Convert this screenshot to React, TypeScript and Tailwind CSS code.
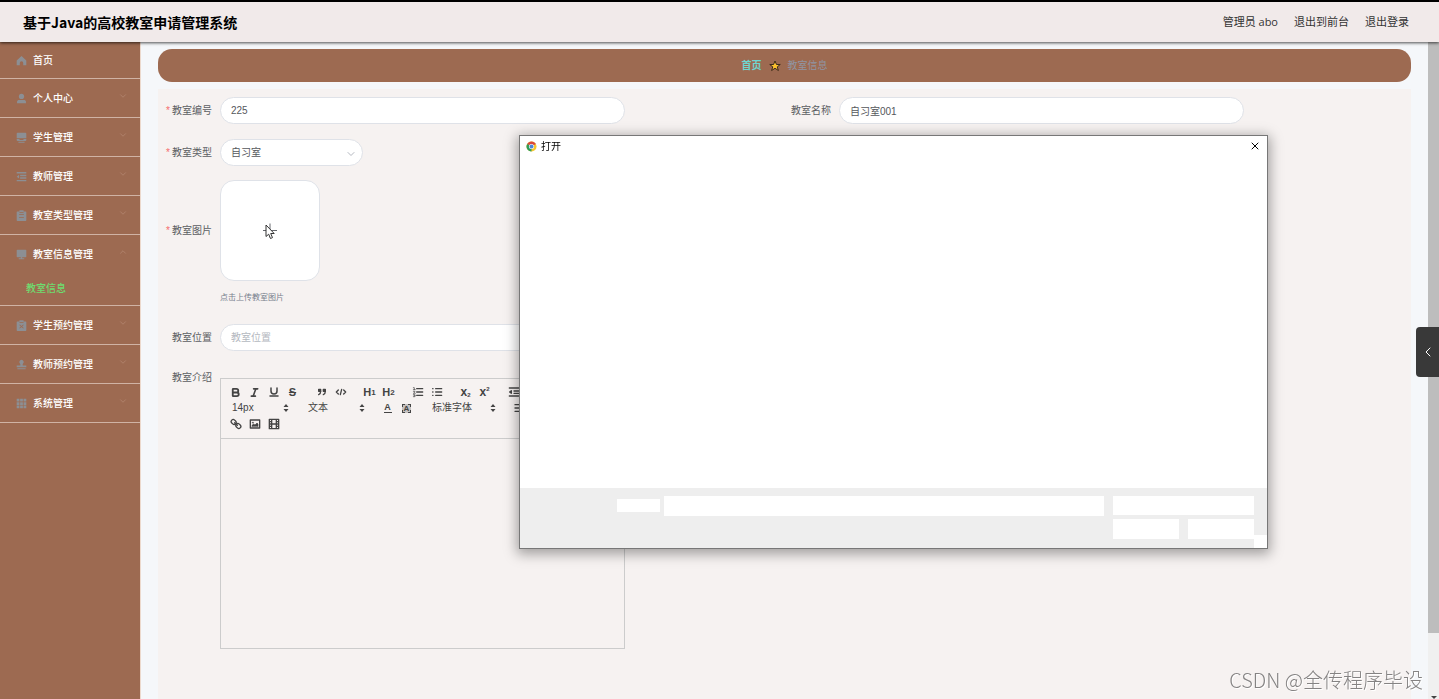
import type { ReactNode } from "react";
import { Bold, ChevronDown, ChevronLeft, ChevronUp, Italic, Underline, X } from "lucide-react";

const menu = [
  { name: "个人中心", icon: "user" },
  { name: "学生管理", icon: "card" },
  { name: "教师管理", icon: "unfold" },
  { name: "教室类型管理", icon: "order" },
  { name: "教室信息管理", icon: "platform", children: ["教室信息"] },
  { name: "学生预约管理", icon: "release" },
  { name: "教师预约管理", icon: "stamp" },
  { name: "系统管理", icon: "grid" },
];

const menuIcons: Record<string, ReactNode> = {
  home: <path d="M8 1.500 1 8v7h4.500v-3.500a2.500 2.500 0 0 1 5 0V15H15V8z" />,
  user: (
    <>
      <circle cx="8" cy="5" r="3.800" />
      <path d="M1.500 15v-2.500c0-1.800 1.500-2.500 3-2.500h7c1.500 0 3 .7 3 2.500V15z" />
    </>
  ),
  card: (
    <>
      <path d="M2.500 1h11a1.500 1.500 0 0 1 1.500 1.500V9H1V2.500A1.500 1.500 0 0 1 2.500 1z" />
      <path d="M1 10h3.500c.5 1 1.500 1.500 3.500 1.500s3-.5 3.500-1.500H15v1.500a1.500 1.500 0 0 1-1.500 1.500h-11A1.500 1.500 0 0 1 1 11.500zM3.500 14h9v1.500h-9z" />
    </>
  ),
  unfold: <path d="M1 1.500h14v2H1zM6 5.500h9v2H6zM6 9.200h9v2H6zM1 13h14v2H1zM4.500 5.500v5.400L1 8.200z" />,
  order: (
    <path
      fillRule="evenodd"
      d="M2 2h3V.5h6V2h3a1 1 0 0 1 1 1v12a1 1 0 0 1-1 1H2a1 1 0 0 1-1-1V3a1 1 0 0 1 1-1zm2.500 4v1.200h7V6zm0 4v1.200h7V10zM5 3v1h6V3z"
    />
  ),
  platform: <path d="M2 1h12a1 1 0 0 1 1 1v9a1 1 0 0 1-1 1H9v1.500h3V15H4v-1.500h3V12H2a1 1 0 0 1-1-1V2a1 1 0 0 1 1-1z" />,
  release: (
    <path
      fillRule="evenodd"
      d="M2 2h3V.5h6V2h3a1 1 0 0 1 1 1v12a1 1 0 0 1-1 1H2a1 1 0 0 1-1-1V3a1 1 0 0 1 1-1zm3.500 4.500L4.700 7.300 7.100 9.500 4.700 11.700l.8.8L8 10.300l2.500 2.200.8-.8L8.900 9.500l2.400-2.200-.8-.8L8 8.700zM5 3v1h6V3z"
    />
  ),
  stamp: <path d="M8 1a3.300 3.300 0 0 0-2.200 5.700C6.500 7.500 6.500 8.500 6.200 9.500H1V12h14V9.500H9.800c-.3-1-.3-2 .4-2.800A3.300 3.300 0 0 0 8 1zM2 13.500h12V15H2z" />,
  grid: <path d="M1 1h4v4H1zM6 1h4v4H6zM11 1h4v4h-4zM1 6h4v4H1zM6 6h4v4H6zM11 6h4v4h-4zM1 11h4v4H1zM6 11h4v4H6zM11 11h4v4h-4z" />,
};

function MenuIcon({ name }: { name: string }) {
  return (
    <svg viewBox="0 0 16 16" className="size-[11px] shrink-0 fill-[#8c8f94]">
      {menuIcons[name]}
    </svg>
  );
}

function Sidebar() {
  return (
    <nav className="w-[141px] shrink-0 border-r border-[#ecd9cd] bg-[#9d6a51] text-[10px] font-medium text-white">
      <a href="#home" className="flex h-[37px] items-center gap-1.5 border-b border-[#d0b3a5] pl-4">
        <MenuIcon name="home" />
        首页
      </a>
      {menu.map((item) => (
        <div key={item.name} className="border-b border-[#d0b3a5]">
          <button type="button" className="flex h-[38px] w-full items-center gap-1.5 pr-3 pl-4">
            <MenuIcon name={item.icon} />
            <span>{item.name}</span>
            {item.children ? (
              <ChevronUp size={10} strokeWidth={1.5} className="mb-1 ml-auto text-[#b98d78]" />
            ) : (
              <ChevronDown size={10} strokeWidth={1.5} className="mb-1 ml-auto text-[#b98d78]" />
            )}
          </button>
          {item.children?.map((child) => (
            <a key={child} href="#room" className="flex h-8 items-center pb-0.5 pl-[26px] text-[#6fdc6f]">
              {child}
            </a>
          ))}
        </div>
      ))}
    </nav>
  );
}

function Label({ id, text, required }: { id: string; text: string; required?: boolean }) {
  return (
    <label htmlFor={id} className="w-[47px] shrink-0 text-right text-[10px] whitespace-nowrap text-[#5c5e63]">
      {required && <span className="mr-0.5 text-[#f56c6c]">*</span>}
      {text}
    </label>
  );
}

const inputStyle =
  "h-[27px] rounded-full border border-[#dfe2e8] bg-white px-2.5 text-[10px] text-[#55575c] outline-none placeholder:text-[#b4b8c0]";

function Tool({ label, children }: { label: string; children: ReactNode }) {
  return (
    <button type="button" aria-label={label} className="flex h-4 w-[19px] items-center justify-center font-bold">
      {children}
    </button>
  );
}

function ToolSvg({ children }: { children: ReactNode }) {
  return (
    <svg viewBox="0 0 18 18" className="size-3 fill-none stroke-[#444] stroke-2" strokeLinecap="round" strokeLinejoin="round">
      {children}
    </svg>
  );
}

function Group({ children }: { children: ReactNode }) {
  return <div className="mr-2.5 flex">{children}</div>;
}

function Picker({ label, value, width = "w-[67px]" }: { label: string; value: string; width?: string }) {
  return (
    <div className={`relative mr-[9px] h-4 ${width}`}>
      <select aria-label={label} className="block h-4 w-full appearance-none pl-1.5 text-[10px] leading-4 outline-none">
        <option>{value}</option>
      </select>
      <svg viewBox="0 0 6 8" className="pointer-events-none absolute top-1 right-1 h-2 w-1.5 fill-[#444]">
        <path d="M3 0l2.500 3h-5zM3 8L.5 5h5z" />
      </svg>
    </div>
  );
}

function Editor() {
  return (
    <div className="mt-[11px] w-[405px] max-w-full border border-[#ccc] text-[#444]">
      <div className="flex flex-wrap border-b border-[#ccc] px-[5px] pt-[5px] pb-1.5">
        <Group>
          <Tool label="粗体"><Bold size={11} strokeWidth={4} /></Tool>
          <Tool label="斜体"><Italic size={11} strokeWidth={3.5} /></Tool>
          <Tool label="下划线"><Underline size={12} strokeWidth={3} /></Tool>
          <Tool label="删除线"><span className="text-[11px] line-through">S</span></Tool>
        </Group>
        <Group>
          <Tool label="引用">
            <ToolSvg>
              <path className="fill-[#444]" d="M4 5h3v3H4zM11 5h3v3h-3z" />
              <path d="M7 8c0 4-3 5-3 5M14 8c0 4-3 5-3 5" />
            </ToolSvg>
          </Tool>
          <Tool label="代码">
            <ToolSvg><path d="M5 6 2 9l3 3M13 6l3 3-3 3M10 5l-2 8" /></ToolSvg>
          </Tool>
        </Group>
        <Group>
          <Tool label="标题一"><span className="text-[11px]">H</span><span className="pt-0.5 text-[8px]">1</span></Tool>
          <Tool label="标题二"><span className="text-[11px]">H</span><span className="pt-0.5 text-[8px]">2</span></Tool>
        </Group>
        <Group>
          <Tool label="有序列表">
            <ToolSvg>
              <path d="M7 4h9M7 9h9M7 14h9" />
              <path className="stroke-1" d="M2 2.500h1.500v3M2 5.500h3M2 8h2.500v1L2 11h3M2 13h2.500v3H2M3 14.500h1.500" />
            </ToolSvg>
          </Tool>
          <Tool label="无序列表">
            <ToolSvg><path d="M7 4h9M7 9h9M7 14h9M2.500 4h.5M2.500 9h.5M2.500 14h.5" /></ToolSvg>
          </Tool>
        </Group>
        <Group>
          <Tool label="下标"><span className="text-[12px]">x</span><span className="pt-1.5 text-[6px]">2</span></Tool>
          <Tool label="上标"><span className="text-[12px]">x</span><span className="pb-1.5 text-[6px]">2</span></Tool>
        </Group>
        <Group>
          <Tool label="减少缩进">
            <ToolSvg><path d="M2 3h14M9 7.500h7M9 11h7M2 15h14M5 7v4L2.500 9z" /></ToolSvg>
          </Tool>
          <Tool label="增加缩进">
            <ToolSvg><path d="M2 3h14M9 7.500h7M9 11h7M2 15h14M3 7v4l2.500-2z" /></ToolSvg>
          </Tool>
        </Group>
        <Group>
          <Tool label="文字方向">
            <ToolSvg><path d="M3 5v8l4-4zM11 3v12M15 3v12M8 3h8" /></ToolSvg>
          </Tool>
        </Group>
        <Picker label="字号" value="14px" />
        <Picker label="标题" value="文本" />
        <Group>
          <Tool label="文字颜色">
            <span className="w-2 border-b border-[#444] text-center text-[9px] leading-[9px]">A</span>
          </Tool>
          <Tool label="背景颜色">
            <span className="w-[9px] border border-dashed border-[#444] bg-[#c4c1c0] text-center text-[8px] leading-[7px]">A</span>
          </Tool>
        </Group>
        <Picker label="字体" value="标准字体" width="w-[74px]" />
        <Group>
          <Tool label="对齐">
            <ToolSvg><path d="M3 4h12M3 9h12M3 14h8" /></ToolSvg>
          </Tool>
        </Group>
        <Group>
          <Tool label="清除格式">
            <ToolSvg><path d="M5 3h9M6 14h5M9 3 7 14M12 11l4 4M16 11l-4 4" /></ToolSvg>
          </Tool>
        </Group>
        <Group>
          <Tool label="链接">
            <ToolSvg>
              <path d="M7 7l4 4" />
              <rect x="1.500" y="3" width="8" height="6" rx="3" transform="rotate(45 5.500 6)" />
              <rect x="8.500" y="9" width="8" height="6" rx="3" transform="rotate(45 12.500 12)" />
            </ToolSvg>
          </Tool>
          <Tool label="图片">
            <ToolSvg>
              <rect x="2" y="3" width="14" height="12" />
              <path className="fill-[#444] stroke-1" d="M4.500 12.500V11L7 9l2 1.500L12 7.500l1.500 1.500v3.500zM5.500 6.500h1v1h-1z" />
            </ToolSvg>
          </Tool>
          <Tool label="视频">
            <ToolSvg><path d="M2 2h14v14H2zM5.500 2v14M12.500 2v14M5.500 9h7M2 5.500h3M2 9h3M2 12.500h3M13 5.500h3M13 9h3M13 12.500h3" /></ToolSvg>
          </Tool>
        </Group>
      </div>
      <textarea id="intro" className="block h-[209px] w-full resize-none bg-transparent p-2 text-[10px] outline-none" />
    </div>
  );
}

function RoomForm() {
  return (
    <form className="flex-1 bg-[#f6f2f1] pt-2 pr-2 pb-[50px] pl-[7px]">
      <div className="grid grid-cols-2">
        <div className="flex items-center gap-2">
          <Label id="code" text="教室编号" required />
          <input id="code" defaultValue="225" className={`${inputStyle} w-[405px]`} />
        </div>
        <div className="flex items-center gap-2">
          <Label id="name" text="教室名称" />
          <input id="name" defaultValue="自习室001" className={`${inputStyle} w-[405px]`} />
        </div>
      </div>
      <div className="mt-[15px] flex items-center gap-2">
        <Label id="type" text="教室类型" required />
        <div className="relative">
          <select id="type" className={`${inputStyle} w-[143px] appearance-none`}>
            <option>自习室</option>
          </select>
          <ChevronDown size={12} strokeWidth={2} className="pointer-events-none absolute top-[9px] right-1.5 text-[#b4b8c0]" />
        </div>
      </div>
      <div className="mt-3.5 flex items-center gap-2">
        <Label id="photo" text="教室图片" required />
        <button
          id="photo"
          type="button"
          aria-label="上传教室图片"
          className="flex h-[101px] w-[100px] items-center justify-center rounded-[14px] border border-[#dfe2e8] bg-white"
        >
          <svg viewBox="0 0 18 20" className="h-5 w-[18px]">
            <path d="M2 9.500h14M9 2.500v14" className="stroke-[#66696e]" />
            <path d="M5 4v11.500l2.700-2.300 1.800 4.300 2-.9-1.800-4.100h3.500z" className="fill-white stroke-[#333]" />
          </svg>
        </button>
      </div>
      <p className="mt-[9px] ml-[55px] text-[8px] leading-4 text-[#777e8c]">点击上传教室图片</p>
      <div className="mt-[18px] grid grid-cols-2">
        <div className="flex items-center gap-2">
          <Label id="place" text="教室位置" />
          <input id="place" placeholder="教室位置" className={`${inputStyle} w-[405px]`} />
        </div>
      </div>
      <div className="mt-4 grid grid-cols-2">
        <div className="flex items-start gap-2 leading-[22px]">
          <Label id="intro" text="教室介绍" />
          <Editor />
        </div>
      </div>
    </form>
  );
}

function OpenDialog() {
  return (
    <div
      role="dialog"
      aria-label="打开"
      className="fixed top-[135px] left-[519px] z-20 flex h-[414px] w-[749px] flex-col border border-[#777] bg-white shadow-[0_3px_12px_2px_rgba(0,0,0,0.35)]"
    >
      <div className="flex h-5 items-center gap-1 px-1.5 text-[10px] text-black">
        <svg viewBox="0 0 24 24" className="size-[11px]">
          <circle cx="12" cy="12" r="11" fill="#f6c72f" />
          <path d="M12 12 2.500 6.500a11 11 0 0 1 19 0z" fill="#d9483b" />
          <path d="M2.500 6.500 12 12v11A11 11 0 0 1 2.500 6.500z" fill="#2f9d58" />
          <circle cx="12" cy="12" r="5.500" fill="#fff" />
          <circle cx="12" cy="12" r="4.300" fill="#4d86d8" />
        </svg>
        打开
        <button type="button" aria-label="关闭" className="ml-auto">
          <X size={12} strokeWidth={2} />
        </button>
      </div>
      <div className="flex-1" />
      <div className="flex h-[60px] bg-[#eee] pt-2 pl-[97px]">
        <div className="mt-[3px] h-[13px] w-[43px] bg-white" />
        <input aria-label="文件名" className="ml-1 h-5 flex-1 bg-white outline-none" />
        <div className="ml-[9px] w-[141px]">
          <select aria-label="文件类型" className="block h-[19px] w-full appearance-none bg-white" />
          <div className="mt-1 flex gap-[9px]">
            <button type="button" aria-label="打开文件" className="h-5 flex-1 bg-white" />
            <button type="button" aria-label="取消" className="h-5 flex-1 bg-white" />
          </div>
        </div>
        <div className="h-[13px] w-[13px] self-end bg-white" />
      </div>
    </div>
  );
}

export default function App() {
  return (
    <div className="flex min-h-screen flex-col bg-[#f5f7fa] font-['Liberation_Sans','Noto_Sans_CJK_SC',sans-serif]">
      <header className="z-10 flex h-[42px] items-center border-t-2 border-black bg-[#f1eaea] pr-[30px] pl-[23px] font-['Open_Sans','Noto_Sans_CJK_SC',sans-serif] shadow-[0_1px_3px_rgba(0,0,0,0.7)]">
        <h1 className="font-['Noto_Sans_CJK_SC',sans-serif] text-[14px] font-bold text-black">基于Java的高校教室申请管理系统</h1>
        <div className="ml-auto flex gap-4 text-[11px] text-[#333]">
          <span>管理员 abo</span>
          <a href="#front">退出到前台</a>
          <a href="#logout">退出登录</a>
        </div>
      </header>
      <div className="flex flex-1">
        <Sidebar />
        <main className="flex flex-1 flex-col px-[17px] pt-[7px]">
          <div className="mb-[7px] flex h-[33px] items-center justify-center gap-[7px] rounded-[14px] bg-[#9d6a51] text-[10px]">
            <a href="#home" className="font-bold text-[#6fd6d2]">首页</a>
            <svg viewBox="0 0 24 24" className="size-3 fill-[#fbc02d] stroke-[#3b2a1c] stroke-2">
              <path d="m12 2 3 7h7.500l-6 4.700 2.300 7.300L12 16.500 5.200 21l2.300-7.300-6-4.700H9z" />
            </svg>
            <span className="text-[#9095a3]">教室信息</span>
          </div>
          <RoomForm />
        </main>
        <div aria-hidden="true" className="flex w-[11px] flex-col items-center bg-[#f0f0f0]">
          <div className="w-full basis-[591px] bg-[#bdbdbd]" />
          <svg viewBox="0 0 6 3" className="mt-auto h-[3px] w-1.5 fill-[#444]"><path d="M0 0h6L3 3z" /></svg>
        </div>
      </div>
      <OpenDialog />
      <button
        type="button"
        aria-label="展开"
        className="fixed top-[327px] right-0 z-20 flex h-[50px] w-[23px] items-center justify-center rounded-l-sm bg-[#393939] text-white"
      >
        <ChevronLeft size={16} strokeWidth={1.5} />
      </button>
      <div className="pointer-events-none fixed right-4 bottom-1 z-20 font-['Noto_Sans_CJK_SC',sans-serif] text-[20px] leading-[30px] font-light text-[#858383] [text-shadow:1px_1px_0_#fff]">
        CSDN @全传程序毕设
      </div>
    </div>
  );
}
